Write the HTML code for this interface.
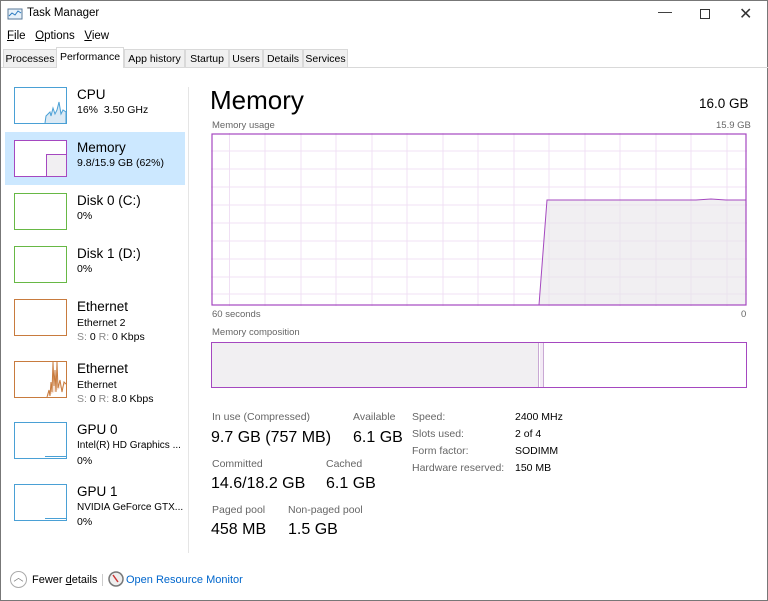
<!DOCTYPE html>
<html><head><style>
*{margin:0;padding:0;box-sizing:border-box}
body{width:768px;height:601px;background:#fff;font-family:"Liberation Sans",sans-serif;color:#000;position:relative;overflow:hidden;border:1px solid #777}
.a{position:absolute;white-space:nowrap}
.tab{position:absolute;top:48px;height:19px;border:1px solid #d9d9d9;background:#f0f0f0;font-size:10.5px;padding:3px 0 0;color:#000;white-space:nowrap;text-align:center;overflow:hidden}
.thumb{position:absolute;left:13px;width:53px;height:37px;background:#fff}
.nm{font-size:13.5px}
.sm{font-size:10.5px}
.lbl{font-size:10.5px;color:#666}
.big{font-size:16px}
</style></head><body>
<svg class="a" style="left:6px;top:6px" width="16" height="14"><rect x="1" y="2" width="14" height="10" fill="#e8f2fa" stroke="#5a7a9a"/><polyline points="2,9 5,6 8,8 11,4 14,6" fill="none" stroke="#2a7ac0"/></svg>
<div class="a" style="left:26px;top:6px;font-size:11.5px">Task Manager</div>
<div class="a" style="left:657px;top:2px;font-size:14px;color:#333">—</div>
<div class="a" style="left:699px;top:8px;width:10px;height:10px;border:1px solid #333"></div>
<div class="a" style="left:738px;top:3px;font-size:16px;color:#333">✕</div>
<div class="a" style="left:6px;top:29px;font-size:11.5px"><u>F</u>ile &nbsp; <u>O</u>ptions &nbsp; <u>V</u>iew</div>
<div class="a" style="left:0;top:66px;width:768px;height:1px;background:#d9d9d9"></div>
<div class="tab" style="left:2px;width:54px">Processes</div>
<div class="tab" style="left:55px;top:46px;height:21px;width:68px;background:#fff;border-bottom:none">Performance</div>
<div class="tab" style="left:123px;width:61px">App history</div>
<div class="tab" style="left:184px;width:44px">Startup</div>
<div class="tab" style="left:228px;width:34px">Users</div>
<div class="tab" style="left:262px;width:40px">Details</div>
<div class="tab" style="left:302px;width:45px">Services</div>

<div class="a" style="left:187px;top:86px;width:1px;height:466px;background:#e5e5e5"></div>
<div class="a" style="left:4px;top:131px;width:180px;height:53px;background:#cce8ff"></div>

<div class="thumb" style="top:86px;border:1px solid #4aa0d5"><svg width="51" height="35"><polyline points="30,35 31,28 33,26 35,24 36,28 38,20 40,26 42,22 44,14 46,26 48,22 51,24 51,35" fill="#dbeaf5" stroke="#4aa0d5"/></svg></div>
<div class="a nm" style="left:76px;top:86px">CPU</div><div class="a sm" style="left:76px;top:103px">16% &nbsp;3.50 GHz</div>

<div class="thumb" style="top:139px;border:1px solid #a548c0"><div class="a" style="left:31px;top:13px;width:21px;height:23px;background:#f1eff2;border:1px solid #a548c0"></div></div>
<div class="a nm" style="left:76px;top:139px">Memory</div><div class="a sm" style="left:76px;top:156px">9.8/15.9 GB (62%)</div>

<div class="thumb" style="top:192px;border:1px solid #67b845"></div>
<div class="a nm" style="left:76px;top:192px">Disk 0 (C:)</div><div class="a sm" style="left:76px;top:209px">0%</div>
<div class="thumb" style="top:245px;border:1px solid #67b845"></div>
<div class="a nm" style="left:76px;top:245px">Disk 1 (D:)</div><div class="a sm" style="left:76px;top:262px">0%</div>

<div class="thumb" style="top:298px;border:1px solid #c87b3e"></div>
<div class="a nm" style="left:76px;top:298px">Ethernet</div><div class="a sm" style="left:76px;top:316px">Ethernet 2</div><div class="a sm" style="left:76px;top:330px"><span style="color:#888">S:</span> 0 <span style="color:#888">R:</span> 0 Kbps</div>
<div class="thumb" style="top:360px;border:1px solid #c87b3e"><svg width="51" height="35"><polyline points="32,35 34,28 35,34 36,20 37,30 38,0 39,24 40,8 41,30 42,0 43,26 45,18 47,30 49,20 51,22" fill="#f7e3d6" stroke="#c87b3e"/></svg></div>
<div class="a nm" style="left:76px;top:360px">Ethernet</div><div class="a sm" style="left:76px;top:378px">Ethernet</div><div class="a sm" style="left:76px;top:392px"><span style="color:#888">S:</span> 0 <span style="color:#888">R:</span> 8.0 Kbps</div>

<div class="thumb" style="top:421px;border:1px solid #4aa0d5"><div class="a" style="left:30px;top:33px;width:21px;height:1px;background:#4aa0d5"></div></div>
<div class="a nm" style="left:76px;top:421px">GPU 0</div><div class="a sm" style="left:76px;top:439px;font-size:10px">Intel(R) HD Graphics ...</div><div class="a sm" style="left:76px;top:454px">0%</div>
<div class="thumb" style="top:483px;border:1px solid #4aa0d5"><div class="a" style="left:30px;top:33px;width:21px;height:1px;background:#4aa0d5"></div></div>
<div class="a nm" style="left:76px;top:483px">GPU 1</div><div class="a sm" style="left:76px;top:501px;font-size:10px">NVIDIA GeForce GTX...</div><div class="a sm" style="left:76px;top:515px">0%</div>

<div class="a" style="left:209px;top:84px;font-size:26px">Memory</div>
<div class="a" style="left:698px;top:95px;font-size:13.5px">16.0 GB</div>
<div class="a lbl" style="left:211px;top:119px;font-size:9.5px">Memory usage</div>
<div class="a lbl" style="left:715px;top:119px;font-size:9.5px">15.9 GB</div>
<svg class="a" style="left:210px;top:132px" width="536" height="173">
<g stroke="#f0e0f4" stroke-width="1">
<line x1="0" y1="18" x2="536" y2="18"/><line x1="0" y1="36" x2="536" y2="36"/><line x1="0" y1="54" x2="536" y2="54"/><line x1="0" y1="72" x2="536" y2="72"/><line x1="0" y1="90" x2="536" y2="90"/><line x1="0" y1="108" x2="536" y2="108"/><line x1="0" y1="126" x2="536" y2="126"/><line x1="0" y1="144" x2="536" y2="144"/><line x1="0" y1="161" x2="536" y2="161"/>
<line x1="18.5" y1="0" x2="18.5" y2="173"/><line x1="54" y1="0" x2="54" y2="173"/><line x1="90" y1="0" x2="90" y2="173"/><line x1="125" y1="0" x2="125" y2="173"/><line x1="161" y1="0" x2="161" y2="173"/><line x1="196" y1="0" x2="196" y2="173"/><line x1="232" y1="0" x2="232" y2="173"/><line x1="267" y1="0" x2="267" y2="173"/><line x1="303" y1="0" x2="303" y2="173"/><line x1="338" y1="0" x2="338" y2="173"/><line x1="374" y1="0" x2="374" y2="173"/><line x1="409" y1="0" x2="409" y2="173"/><line x1="445" y1="0" x2="445" y2="173"/><line x1="480" y1="0" x2="480" y2="173"/><line x1="516" y1="0" x2="516" y2="173"/>
</g>
<polygon points="328,172 336,67 485,67 500,66 515,67 535,67 535,172" fill="#e8e4ea" fill-opacity="0.6" stroke="#a548c0" stroke-width="1"/>
<rect x="1" y="1" width="534" height="171" fill="none" stroke="#a548c0" stroke-width="1.2"/>
</svg>
<div class="a lbl" style="left:211px;top:308px;font-size:9.5px">60 seconds</div>
<div class="a lbl" style="left:740px;top:308px;font-size:9.5px">0</div>
<div class="a lbl" style="left:211px;top:326px;font-size:9.5px">Memory composition</div>
<div class="a" style="left:210px;top:341px;width:536px;height:46px;border:1px solid #a548c0">
<div class="a" style="left:0;top:0;width:327px;height:44px;background:#f1eff2;border-right:1px solid #c9a8d4"></div>
<div class="a" style="left:328px;top:0;width:4px;height:44px;background:#f3eaf5;border-right:1px solid #c9a8d4"></div>
</div>

<div class="a lbl" style="left:211px;top:410px">In use (Compressed)</div><div class="a big" style="left:210px;top:428px">9.7 GB (757 MB)</div>
<div class="a lbl" style="left:352px;top:410px">Available</div><div class="a big" style="left:352px;top:428px">6.1 GB</div>
<div class="a lbl" style="left:211px;top:457px">Committed</div><div class="a big" style="left:210px;top:474px">14.6/18.2 GB</div>
<div class="a lbl" style="left:325px;top:457px">Cached</div><div class="a big" style="left:325px;top:474px">6.1 GB</div>
<div class="a lbl" style="left:211px;top:503px">Paged pool</div><div class="a big" style="left:210px;top:520px">458 MB</div>
<div class="a lbl" style="left:287px;top:503px">Non-paged pool</div><div class="a big" style="left:287px;top:520px">1.5 GB</div>
<div class="a lbl" style="left:411px;top:410px">Speed:</div><div class="a sm" style="left:514px;top:410px">2400 MHz</div>
<div class="a lbl" style="left:411px;top:427px">Slots used:</div><div class="a sm" style="left:514px;top:427px">2 of 4</div>
<div class="a lbl" style="left:411px;top:444px">Form factor:</div><div class="a sm" style="left:514px;top:444px">SODIMM</div>
<div class="a lbl" style="left:411px;top:461px">Hardware reserved:</div><div class="a sm" style="left:514px;top:461px">150 MB</div>

<div class="a" style="left:9px;top:570px;width:17px;height:17px;border:1px solid #aaa;border-radius:50%;font-size:10px;color:#777;text-align:center;line-height:14px">︿</div>
<div class="a" style="left:31px;top:573px;font-size:11px">Fewer <u>d</u>etails</div>
<div class="a" style="left:101px;top:573px;width:1px;height:12px;background:#ccc"></div>
<svg class="a" style="left:107px;top:570px" width="16" height="16"><circle cx="8" cy="8" r="7" fill="#eee" stroke="#777" stroke-width="1.5"/><line x1="5" y1="4" x2="10" y2="11" stroke="#c33" stroke-width="1.5"/></svg>
<div class="a" style="left:125px;top:573px;font-size:11px;color:#0066cc">Open Resource Monitor</div>
</body></html>
